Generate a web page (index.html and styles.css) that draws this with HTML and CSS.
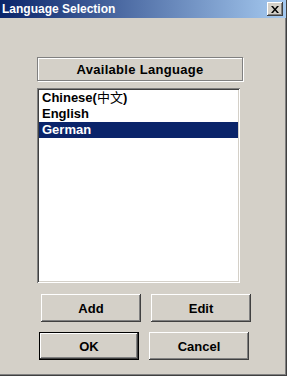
FILE: index.html
```html
<!DOCTYPE html>
<html lang="en">
<head>
    <meta charset="UTF-8">
    <title>Language Selection</title>
    <link rel="stylesheet" href="styles.css">
</head>
<body>

<div class="window">
    <div class="titlebar">
        <span class="title">Language Selection</span>
        <button class="close-btn" type="button">
            <svg width="8" height="7" viewBox="0 0 8 7">
                <path d="M0 0h2l2 2.5L6 0h2L5 3.5 8 7H6L4 4.5 2 7H0l3-3.5z" fill="#000"/>
            </svg>
        </button>
    </div>

    <div class="content">
        <div class="group-label">Available Language</div>

        <ul class="lang-list">
            <li>Chinese(<span class="cjk">中文</span>)</li>
            <li>English</li>
            <li class="selected">German</li>
        </ul>

        <div class="btn-row">
            <button class="btn" type="button">Add</button>
            <button class="btn" type="button">Edit</button>
        </div>
        <div class="btn-row second">
            <button class="btn default" type="button">OK</button>
            <button class="btn" type="button">Cancel</button>
        </div>
    </div>
</div>

</body>
</html>
```

FILE: styles.css
```css
body {
    margin: 0;
    background-color: #d4d0c8;
    font-family: "Liberation Sans", "Noto Sans CJK SC", sans-serif;
}
.window {
    width: 287px;
    height: 376px;
    box-sizing: border-box;
    background-color: #d4d0c8;
    border-right: 1px solid #404040;
    border-bottom: 1px solid #404040;
    box-shadow: inset -1px -1px 0 #808080;
    overflow: hidden;
}
.titlebar {
    height: 18px;
    display: flex;
    align-items: center;
    justify-content: space-between;
    padding: 0 3px 0 2px;
    background: linear-gradient(to right, #0a246a, #a6caf0);
}
.title {
    color: #fff;
    font-weight: bold;
    font-size: 12px;
}
.close-btn {
    width: 16px;
    height: 14px;
    padding: 0;
    display: flex;
    align-items: center;
    justify-content: center;
    background-color: #d4d0c8;
    border: none;
    box-shadow: inset -1px -1px #404040, inset 1px 1px #fff, inset -2px -2px #808080;
}
.content {
    padding: 39px 0 0 37px;
}
.group-label {
    width: 204px;
    height: 22px;
    border: 1px solid #808080;
    box-shadow: inset 1px 1px #fff, 1px 1px #fff;
    display: flex;
    align-items: center;
    justify-content: center;
    font-weight: bold;
    font-size: 13px;
    letter-spacing: 0.3px;
    color: #000;
}
.lang-list {
    list-style: none;
    margin: 7px 0 0 0;
    padding: 2px;
    width: 203px;
    height: 195px;
    box-sizing: border-box;
    background-color: #fff;
    box-shadow: inset 1px 1px #808080, inset -1px -1px #fff, inset 2px 2px #404040, inset -2px -2px #d4d0c8;
}
.lang-list li {
    height: 16px;
    line-height: 16px;
    padding-left: 3px;
    font-weight: bold;
    font-size: 13px;
    color: #000;
}
.lang-list li .cjk {
    font-weight: normal;
}
.lang-list li.selected {
    background-color: #0a246a;
    color: #fff;
}
.btn-row {
    display: flex;
    gap: 10px;
    margin-top: 11px;
    margin-left: 4px;
}
.btn-row.second {
    margin-top: 10px;
    margin-left: 2px;
}
.btn {
    width: 100px;
    height: 28px;
    padding: 0;
    border: none;
    background-color: #d4d0c8;
    box-shadow: inset -1px -1px #404040, inset 1px 1px #fff, inset -2px -2px #808080;
    font-family: "Liberation Sans", sans-serif;
    font-weight: bold;
    font-size: 13px;
    color: #000;
}
.btn.default {
    border: 1px solid #000;
}
```
